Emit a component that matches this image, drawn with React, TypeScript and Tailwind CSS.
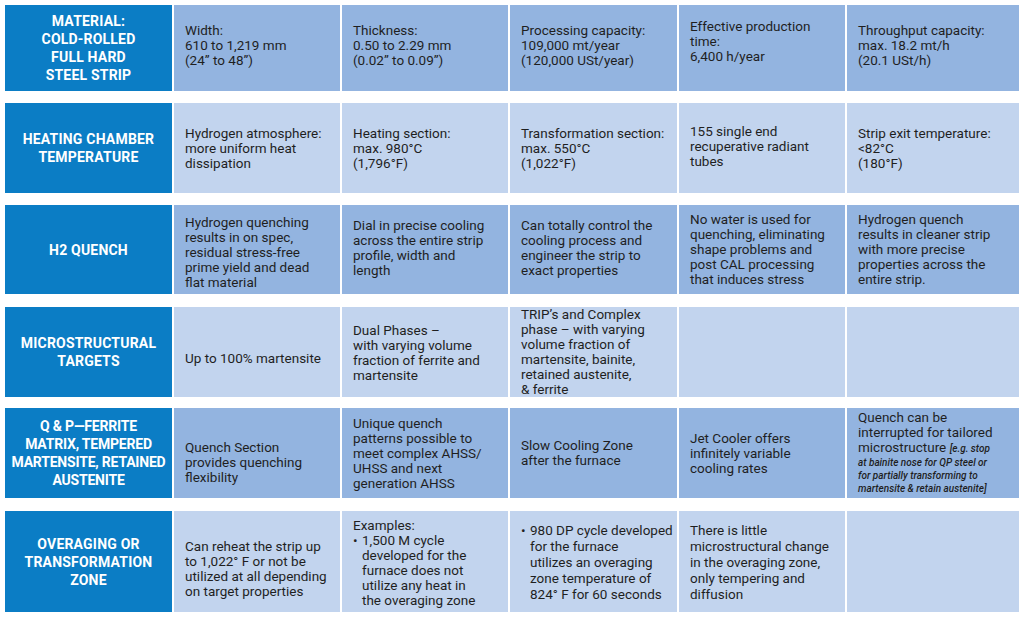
import React from 'react';

type Cell = { lines: React.ReactNode[]; cls?: string };
type Row = { head: string[]; tone: 'dark' | 'light'; h: string; mt: string; cells: Cell[] };

const Bullet = ({ children }: { children: React.ReactNode }) => (
    <div className="flex">
        <span className="w-[9px] shrink-0">•</span>
        <span>{children}</span>
    </div>
);

const rows: Row[] = [
    {
        head: ['MATERIAL:', 'COLD-ROLLED', 'FULL HARD', 'STEEL STRIP'],
        tone: 'dark',
        h: 'h-[86px]',
        mt: 'mt-0',
        cells: [
            { lines: ['Width:', '610 to 1,219 mm', '(24” to 48”)'], cls: 'pb-[6px]' },
            { lines: ['Thickness:', '0.50 to 2.29 mm', '(0.02” to 0.09”)'], cls: 'pb-[6px]' },
            { lines: ['Processing capacity:', '109,000 mt/year', '(120,000 USt/year)'], cls: 'pb-[6px]' },
            { lines: ['Effective production', 'time:', '6,400 h/year'], cls: 'pb-[14px]' },
            { lines: ['Throughput capacity:', 'max. 18.2 mt/h', '(20.1 USt/h)'], cls: 'pb-[6px]' },
        ],
    },
    {
        head: ['HEATING CHAMBER', 'TEMPERATURE'],
        tone: 'light',
        h: 'h-[90px]',
        mt: 'mt-[12px]',
        cells: [
            { lines: ['Hydrogen atmosphere:', 'more uniform heat', 'dissipation'] },
            { lines: ['Heating section:', 'max. 980°C', '(1,796°F)'] },
            { lines: ['Transformation section:', 'max. 550°C', '(1,022°F)'] },
            { lines: ['155 single end', 'recuperative radiant', 'tubes'], cls: 'pb-[4px]' },
            { lines: ['Strip exit temperature:', '<82°C', '(180°F)'] },
        ],
    },
    {
        head: ['H2 QUENCH'],
        tone: 'dark',
        h: 'h-[89px]',
        mt: 'mt-[12px]',
        cells: [
            {
                lines: ['Hydrogen quenching', 'results in on spec,', 'residual stress-free', 'prime yield and dead', 'flat material'],
                cls: 'leading-[14.5px] pt-[6px]',
            },
            { lines: ['Dial in precise cooling', 'across the entire strip', 'profile, width and', 'length'], cls: 'pb-[4px]' },
            { lines: ['Can totally control the', 'cooling process and', 'engineer the strip to', 'exact properties'], cls: 'pb-[4px]' },
            {
                lines: ['No water is used for', 'quenching, eliminating', 'shape problems and', 'post CAL processing', 'that induces stress'],
                cls: 'leading-[14.5px]',
            },
            {
                lines: ['Hydrogen quench', 'results in cleaner strip', 'with more precise', 'properties across the', 'entire strip.'],
                cls: 'leading-[14.5px]',
            },
        ],
    },
    {
        head: ['MICROSTRUCTURAL', 'TARGETS'],
        tone: 'light',
        h: 'h-[89px]',
        mt: 'mt-[13px]',
        cells: [
            { lines: ['Up to 100% martensite'], cls: 'pt-[12px]' },
            { lines: ['Dual Phases –', 'with varying volume', 'fraction of ferrite and', 'martensite'], cls: 'pt-[2px]' },
            {
                lines: ['TRIP’s and Complex', 'phase – with varying', 'volume fraction of', 'martensite, bainite,', 'retained austenite,', '& ferrite'],
                cls: 'leading-[14.3px]',
            },
            { lines: [] },
            { lines: [] },
        ],
    },
    {
        head: ['Q & P—FERRITE', 'MATRIX, TEMPERED', 'MARTENSITE, RETAINED', 'AUSTENITE'],
        tone: 'dark',
        h: 'h-[90px]',
        mt: 'mt-[12px]',
        cells: [
            { lines: ['Quench Section', 'provides quenching', 'flexibility'], cls: 'pt-[18px]' },
            { lines: ['Unique quench', 'patterns possible to', 'meet complex AHSS/', 'UHSS and next', 'generation AHSS'] },
            { lines: ['Slow Cooling Zone', 'after the furnace'] },
            { lines: ['Jet Cooler offers', 'infinitely variable', 'cooling rates'] },
            {
                lines: [
                    'Quench can be',
                    'interrupted for tailored',
                    <span key="m">
                        microstructure{' '}
                        <span className="italic text-[10px] font-medium">[e.g. stop</span>
                    </span>,
                    <span key="a" className="italic text-[10px] font-medium leading-[13px] block">at bainite nose for QP steel or</span>,
                    <span key="b" className="italic text-[10px] font-medium leading-[13px] block">for partially transforming to</span>,
                    <span key="c" className="italic text-[10px] font-medium leading-[13px] block">martensite &amp; retain austenite]</span>,
                ],
                cls: 'pb-[2px]',
            },
        ],
    },
    {
        head: ['OVERAGING OR', 'TRANSFORMATION', 'ZONE'],
        tone: 'light',
        h: 'h-[101px]',
        mt: 'mt-[13px]',
        cells: [
            {
                lines: ['Can reheat the strip up', 'to 1,022° F or not be', 'utilized at all depending', 'on target properties'],
                cls: 'pt-[14px]',
            },
            {
                lines: [
                    'Examples:',
                    <Bullet key="b">
                        1,500 M cycle
                        <br />
                        developed for the
                        <br />
                        furnace does not
                        <br />
                        utilize any heat in
                        <br />
                        the overaging zone
                    </Bullet>,
                ],
                cls: 'leading-[15.7px] pt-[3px]',
            },
            {
                lines: [
                    <Bullet key="b">
                        980 DP cycle developed
                        <br />
                        for the furnace
                        <br />
                        utilizes an overaging
                        <br />
                        zone temperature of
                        <br />
                        824° F for 60 seconds
                    </Bullet>,
                ],
                cls: 'leading-[16px]',
            },
            {
                lines: ['There is little', 'microstructural change', 'in the overaging zone,', 'only tempering and', 'diffusion'],
                cls: 'leading-[16px]',
            },
            { lines: [] },
        ],
    },
];

export default function App() {
    return (
        <div
            className="w-[1024px] h-[618px] bg-white pt-[5px] pl-[5px] overflow-hidden"
            style={{ fontFamily: 'Roboto, "Liberation Sans", sans-serif' }}
        >
            {rows.map((row, i) => (
                <div
                    key={i}
                    className={`grid grid-cols-[167px_166px_166px_167px_166px_172px] gap-x-[2px] ${row.h} ${row.mt}`}
                >
                    {/* row heading */}
                    <div className="bg-[#0b7dc5] flex items-center justify-center text-center text-white font-bold text-[14px] leading-[18px] tracking-[0.2px]">
                        <div className={i === 4 ? 'tracking-[-0.2px]' : ''}>
                            {row.head.map((h, j) => (
                                <div key={j}>{h}</div>
                            ))}
                        </div>
                    </div>
                    {row.cells.map((c, j) => (
                        <div
                            key={j}
                            className={`${row.tone === 'dark' ? 'bg-[#93b4e0]' : 'bg-[#c2d4ee]'} flex flex-col justify-center pl-[11px] pr-[2px] text-[13.5px] leading-[15px] text-[#1f1f1f] whitespace-nowrap ${c.cls ?? ''}`}
                        >
                            {c.lines.map((l, k) => (
                                <div key={k}>{l}</div>
                            ))}
                        </div>
                    ))}
                </div>
            ))}
        </div>
    );
}
